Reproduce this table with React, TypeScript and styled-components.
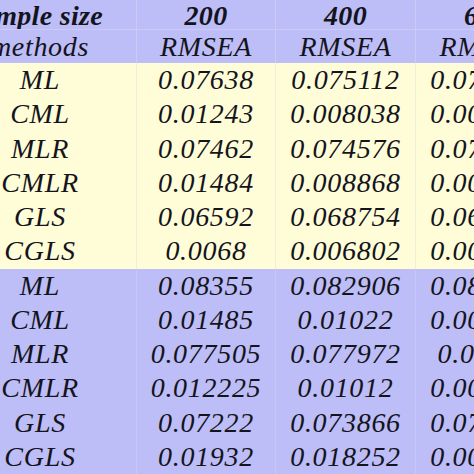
import styled, { createGlobalStyle } from "styled-components";

const GlobalStyle = createGlobalStyle`
  html, body {
    margin: 0;
    padding: 0;
    width: 474px;
    height: 474px;
    overflow: hidden;
    background: #bdbdf7;
  }
`;

type Group = "head" | "classic" | "robust";

const rows: { group: Group; method: string; values: string[] }[] = [
  { group: "classic", method: "ML", values: ["0.07638", "0.075112", "0.074985"] },
  { group: "classic", method: "CML", values: ["0.01243", "0.008038", "0.005912"] },
  { group: "classic", method: "MLR", values: ["0.07462", "0.074576", "0.074313"] },
  { group: "classic", method: "CMLR", values: ["0.01484", "0.008868", "0.006021"] },
  { group: "classic", method: "GLS", values: ["0.06592", "0.068754", "0.069512"] },
  { group: "classic", method: "CGLS", values: ["0.0068", "0.006802", "0.005017"] },
  { group: "robust", method: "ML", values: ["0.08355", "0.082906", "0.080712"] },
  { group: "robust", method: "CML", values: ["0.01485", "0.01022", "0.007841"] },
  { group: "robust", method: "MLR", values: ["0.077505", "0.077972", "0.07723"] },
  { group: "robust", method: "CMLR", values: ["0.012225", "0.01012", "0.007215"] },
  { group: "robust", method: "GLS", values: ["0.07222", "0.073866", "0.074431"] },
  { group: "robust", method: "CGLS", values: ["0.01932", "0.018252", "0.008123"] },
];

const sizes = ["200", "400", "600"];

const App = () => {
  return (
    <>
      <GlobalStyle />
      <Table>
        <Row $group="head" $height={29}>
          <Cell $bold $shift={-6}>
            Sample size
          </Cell>
          {sizes.map((s) => (
            <Cell key={s} $bold>
              {s}
            </Cell>
          ))}
        </Row>
        <Row $group="head" $height={34} $topLine>
          <Cell>methods</Cell>
          {sizes.map((s) => (
            <Cell key={s}>RMSEA</Cell>
          ))}
        </Row>
        {rows.map((r, i) => (
          <Row key={i} $group={r.group} $height={34.25}>
            <Cell>{r.method}</Cell>
            {r.values.map((v, j) => (
              <Cell key={j}>{v}</Cell>
            ))}
          </Row>
        ))}
      </Table>
    </>
  );
};

const Table = styled.div`
  display: flex;
  flex-direction: column;
  margin-left: -56px;
  width: 611px;
  font-family: "Liberation Serif", "DejaVu Serif", serif;
  font-style: italic;
  font-size: 28px;
  color: #14141c;
`;

const groupBg: Record<Group, string> = {
  head: "#bdbdf7",
  classic: "#fffdd8",
  robust: "#bdbdf7",
};

const groupLine: Record<Group, string> = {
  head: "#cbcbf6",
  classic: "#efeed8",
  robust: "#c7c7f5",
};

const Row = styled.div<{ $group: Group; $height: number; $topLine?: boolean }>`
  display: grid;
  grid-template-columns: 192px 139px 140px 140px;
  height: ${(p) => p.$height}px;
  background: ${(p) => groupBg[p.$group]};
  border-top: ${(p) => (p.$topLine ? `1px solid ${groupLine.head}` : "none")};
  box-sizing: border-box;

  & > div + div {
    border-left: 1px solid ${(p) => groupLine[p.$group]};
  }
`;

const Cell = styled.div<{ $bold?: boolean; $shift?: number }>`
  display: flex;
  align-items: center;
  justify-content: center;
  white-space: nowrap;
  letter-spacing: ${(p) => (p.$bold ? "0.3px" : "0.7px")};
  font-weight: ${(p) => (p.$bold ? 700 : 400)};
  padding-right: ${(p) => (p.$shift ? -p.$shift * 2 : 0)}px;
`;

export default App;
